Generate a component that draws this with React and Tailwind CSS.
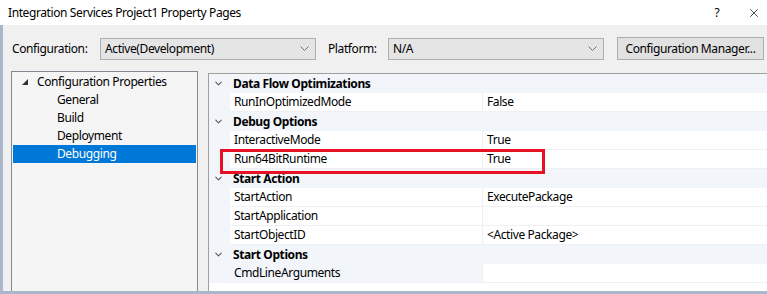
import React from 'react';
import { ChevronDown, X } from 'lucide-react';

const font = { fontFamily: '"Noto Sans", "Open Sans", sans-serif' };

const rows = [
  { cat: 'Data Flow Optimizations' },
  { name: 'RunInOptimizedMode', value: 'False' },
  { cat: 'Debug Options' },
  { name: 'InteractiveMode', value: 'True' },
  { name: 'Run64BitRuntime', value: 'True' },
  { cat: 'Start Action' },
  { name: 'StartAction', value: 'ExecutePackage' },
  { name: 'StartApplication', value: '' },
  { name: 'StartObjectID', value: '<Active Package>' },
  { cat: 'Start Options' },
  { name: 'CmdLineArguments', value: '', muted: true },
];

const Combo = ({ value }) => (
  <div className="w-[216px] h-[22px] bg-[#e5e5e5] border border-[#adadad] flex items-center pl-[4px] pr-[6px]">
    <span className="flex-1 leading-none">{value}</span>
    <svg width="9" height="6" viewBox="0 0 9 6" className="text-[#707070]">
      <path d="M0.5 0.5 L4.5 4.5 L8.5 0.5" fill="none" stroke="currentColor" strokeWidth="1" />
    </svg>
  </div>
);

const TreeItem = ({ label, selected }) => (
  <div className={`h-[18px] flex items-center mx-[1px] ${selected ? 'bg-[#0078d7] text-white' : 'text-black'}`}>
    <span className="pl-[44px]">{label}</span>
  </div>
);

export default function App() {
  return (
    <div className="w-[767px] h-[294px] bg-[#f0f0f0] flex flex-col overflow-hidden text-[12px] tracking-[-0.4px] text-black" style={font}>
      {/* title bar */}
      <div className="h-[25px] bg-white flex items-center pl-[8px] shrink-0">
        <span className="flex-1">Integration Services Project1 Property Pages</span>
        <span className="w-[20px] text-center mr-[20px]">?</span>
        <X className="w-[14px] h-[14px] mr-[6px]" strokeWidth={1.2} />
      </div>

      <div className="flex-1 flex flex-col border-l-[3px] border-b-[3px] border-[#aab6c9]">
        {/* configuration row */}
        <div className="h-[46px] flex items-center pl-[9px] shrink-0 pt-[1px]">
          <span className="w-[88px]">Configuration:</span>
          <Combo value="Active(Development)" />
          <span className="w-[60px] ml-[12px]">Platform:</span>
          <Combo value="N/A" />
          <button className="ml-[13px] w-[147px] h-[23px] bg-[#e1e1e1] border border-[#adadad] leading-none">
            Configuration Manager...
          </button>
        </div>

        {/* panels */}
        <div className="flex-1 flex pl-[8px] gap-[10px] min-h-0">
          {/* tree */}
          <div className="w-[187px] bg-[#f5f5f5] border border-b-0 border-[#828790] pt-[1px]">
            <div className="h-[18px] flex items-center">
              <svg width="6" height="6" viewBox="0 0 6 6" className="ml-[10px] mr-[9px]">
                <path d="M6 0 L6 6 L0 6 Z" fill="#333" />
              </svg>
              <span>Configuration Properties</span>
            </div>
            <TreeItem label="General" />
            <TreeItem label="Build" />
            <TreeItem label="Deployment" />
            <TreeItem label="Debugging" selected />
          </div>

          {/* property grid */}
          <div className="flex-1 mt-[2px] border-t border-l border-[#a0a0a0] bg-white relative flex flex-col">
            {rows.map((r, i) =>
              r.cat ? (
                <div key={i} className="h-[19px] flex items-center bg-[#f2f5fa]">
                  <ChevronDown className="w-[11px] h-[11px] ml-[4px] mr-[9px] text-[#555]" strokeWidth={2.2} />
                  <span className="font-bold">{r.cat}</span>
                </div>
              ) : (
                <div key={i} className="h-[19px] flex bg-[#f2f5fa]">
                  <div className="w-[21px]" />
                  <div className={`w-[252px] flex items-center pl-[4px] border-b border-[#eef0f3] ${r.muted ? 'bg-[#f2f5fa]' : 'bg-white'}`}>
                    {r.name}
                  </div>
                  <div className="w-[1px] bg-[#eef0f3]" />
                  <div className="flex-1 flex items-center pl-[4px] bg-white border-b border-[#eef0f3]">
                    {r.value}
                  </div>
                </div>
              )
            )}
            <div className="flex-1 bg-white" />
            {/* highlight */}
            <div className="absolute left-[11px] top-[75px] w-[325px] h-[25px] border-[3px] border-[#e81123]" />
          </div>
        </div>
      </div>
    </div>
  );
}
